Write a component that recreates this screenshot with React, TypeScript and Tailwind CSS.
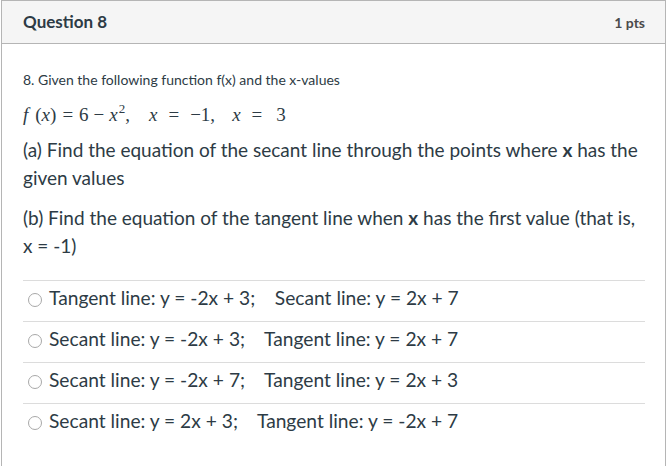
import React from 'react';

const answers: [string, string][] = [
  ['Tangent line: y = -2x + 3;', 'Secant line: y = 2x + 7'],
  ['Secant line: y = -2x + 3;', 'Tangent line: y = 2x + 7'],
  ['Secant line: y = -2x + 7;', 'Tangent line: y = 2x + 3'],
  ['Secant line: y = 2x + 3;', 'Tangent line: y = -2x + 7'],
];

// f(x) = 6 - x^2, x = -1, x = 3 set like the MathJax output
function MathLine() {
  return (
    <div className="flex items-baseline text-[19px] leading-none text-[#2d3b45] [font-family:'Liberation_Serif',serif]">
      <i>f</i>
      <span className="ml-[7px]">(</span>
      <i>x</i>
      <span>)</span>
      <span className="ml-[6px]">=</span>
      <span className="ml-[6px]">6</span>
      <span className="ml-[5px]">−</span>
      <i className="ml-[5px]">x</i>
      <span className="text-[13px] relative -top-[8px] ml-[1px]">2</span>
      <span>,</span>
      <i className="ml-[19px]">x</i>
      <span className="ml-[11px]">=</span>
      <span className="ml-[11px]">−1,</span>
      <i className="ml-[17px]">x</i>
      <span className="ml-[11px]">=</span>
      <span className="ml-[14px]">3</span>
    </div>
  );
}

export default function App() {
  return (
    <div className="w-[666px] h-[466px] bg-white overflow-hidden [font-family:Lato,'Liberation_Sans',sans-serif] text-[#2d3b45]">
      <div className="ml-[1px] w-[665px] h-[466px] border-l border-r border-t border-[#b5b5b5]">
        <div className="h-[43px] bg-[#f5f5f5] border-b border-[#b5b5b5] flex items-center justify-between pl-[21px] pr-[20px]">
          <h2 className="font-bold text-[17px]">Question 8</h2>
          <span className="font-bold text-[14px] text-[#4a4a4a]">1 pts</span>
        </div>

        <div className="pl-[21px] pr-[20px] pt-[26px]">
          <p className="text-[14px] leading-[20px]">8. Given the following function f(x) and the x-values</p>
          <div className="mt-[15px]">
            <MathLine />
          </div>
          <p className="mt-[12px] text-[19px] leading-[28px]">
            (a) Find the equation of the secant line through the points where <b>x</b> has the given values
          </p>
          <p className="mt-[12px] text-[19px] leading-[28px]">
            (b) Find the equation of the tangent line when <b>x</b> has the first value (that is, x = -1)
          </p>

          <div className="mt-[20px]">
            {answers.map(([a, b], i) => (
              <div key={i} className="h-[41px] flex items-center border-t border-[#dcdcdc]">
                <span className="ml-[5px] w-[14px] h-[14px] rounded-full border border-[#a8a8a8] bg-white shrink-0 -mt-[2px]" />
                <span className="ml-[7px] text-[19.2px] leading-none whitespace-pre -mt-[6px]">
                  {a}
                  {'    '}
                  {b}
                </span>
              </div>
            ))}
          </div>
        </div>
      </div>
    </div>
  );
}
